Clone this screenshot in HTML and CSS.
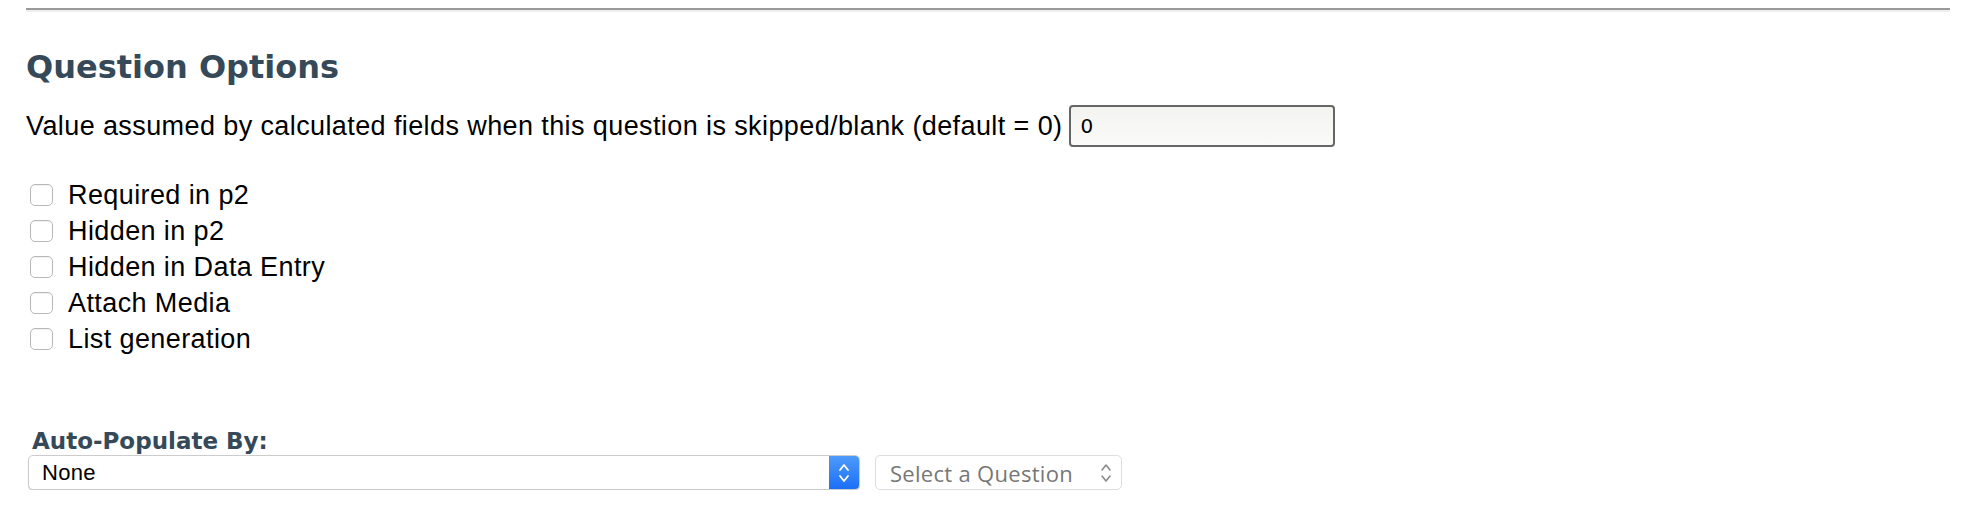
FILE: index.html
```html
<!DOCTYPE html>
<html lang="en">
<head>
    <meta charset="UTF-8">
    <title>Question Options</title>
    <link rel="stylesheet" href="styles.css">
</head>
<body>
    <div class="panel">
        <hr class="divider">

        <h2 class="section-title">Question Options</h2>

        <div class="default-row">
            <label for="blank-value">Value assumed by calculated fields when this question is skipped/blank (default = 0)</label>
            <input type="text" id="blank-value" class="blank-input" value="0">
        </div>

        <div class="flags">
            <label class="flag"><input type="checkbox" id="required"> Required in p2</label>
            <label class="flag"><input type="checkbox" id="hidden"> Hidden in p2</label>
            <label class="flag"><input type="checkbox" id="hidden-entry"> Hidden in Data Entry</label>
            <label class="flag"><input type="checkbox" id="attach-media"> Attach Media</label>
            <label class="flag"><input type="checkbox" id="list-gen"> List generation</label>
        </div>

        <div class="populate">
            <div class="populate-title">Auto-Populate By:</div>
            <div class="populate-row">
                <div class="select-box primary">
                    <select id="populate-by">
                        <option>None</option>
                        <option>Question</option>
                    </select>
                    <span class="chevrons">
                        <svg width="12" height="22" viewBox="0 0 12 22"><path d="M2 8 L6 3 L10 8 M2 14 L6 19 L10 14" fill="none" stroke="#fff" stroke-width="1.8" stroke-linecap="round" stroke-linejoin="round"/></svg>
                    </span>
                </div>
                <div class="select-box secondary">
                    <select id="populate-question">
                        <option>Select a Question</option>
                    </select>
                    <span class="chevrons">
                        <svg width="12" height="22" viewBox="0 0 12 22"><path d="M2 8 L6 3 L10 8 M2 14 L6 19 L10 14" fill="none" stroke="#8a8a8a" stroke-width="1.6" stroke-linecap="round" stroke-linejoin="round"/></svg>
                    </span>
                </div>
            </div>
        </div>
    </div>
</body>
</html>
```

FILE: styles.css
```css
body {
    margin: 0;
    font-family: "Liberation Sans", Arial, sans-serif;
    color: #000;
    background: #fff;
}
.panel {
    padding: 8px 38px 0 26px;
}
.divider {
    margin: 0;
    border: none;
    border-top: 2px solid #999;
    border-bottom: 2px solid #eee;
    height: 0;
}
.section-title {
    font-family: "DejaVu Sans", Verdana, sans-serif;
    font-weight: bold;
    font-size: 32px;
    color: #364958;
    margin: 36px 0 0 0;
    line-height: 38px;
}
.default-row {
    display: flex;
    align-items: center;
    gap: 7px;
    margin-top: 19px;
    font-size: 27px;
    letter-spacing: 0.4px;
}
.blank-input {
    width: 250px;
    height: 38px;
    box-sizing: content-box;
    padding: 0 3px 0 9px;
    border: 2px solid #666;
    border-radius: 4px;
    background: linear-gradient(#f3f3f0, #fafaf8);
    font-family: "DejaVu Sans", Verdana, sans-serif;
    font-size: 20px;
    letter-spacing: 0;
    color: #000;
}
.flags {
    margin-top: 30px;
    display: flex;
    flex-direction: column;
}
.flag {
    display: flex;
    align-items: center;
    gap: 15px;
    height: 36px;
    font-size: 27px;
    letter-spacing: 0.4px;
    padding-left: 4px;
}
.flag input[type="checkbox"] {
    appearance: none;
    -webkit-appearance: none;
    margin: 0;
    width: 23px;
    height: 22px;
    border: 1px solid #b8b8b8;
    border-radius: 5px;
    background: #fff;
    box-shadow: inset 0 1px 1px rgba(0,0,0,0.06);
}
.populate {
    margin-top: 71px;
    padding-left: 2px;
}
.populate-title {
    font-family: "DejaVu Sans", Verdana, sans-serif;
    font-weight: bold;
    font-size: 23px;
    color: #364958;
    line-height: 26px;
    padding-left: 4px;
}
.populate-row {
    display: flex;
    gap: 15px;
    margin-top: 1px;
}
.select-box {
    display: flex;
    height: 33px;
    border: 1px solid #ccc;
    border-radius: 5px;
    background: #fff;
    box-shadow: 0 1px 1px rgba(0,0,0,0.15);
    overflow: hidden;
}
.select-box select {
    appearance: none;
    -webkit-appearance: none;
    border: none;
    background: transparent;
    flex: 1;
    padding: 0 13px;
    font-family: "Liberation Sans", Arial, sans-serif;
    font-size: 22px;
    letter-spacing: 0.3px;
    color: #000;
    outline: none;
}
.primary {
    width: 830px;
}
.primary .chevrons {
    width: 30px;
    display: flex;
    align-items: center;
    justify-content: center;
    background: linear-gradient(#4d9bfb, #1b6ff6);
}
.secondary {
    width: 245px;
    border-color: #ddd;
    box-shadow: none;
}
.secondary select {
    color: #777;
    font-family: "Open Sans", "Liberation Sans", sans-serif;
    font-size: 22px;
    letter-spacing: 0.3px;
    padding-left: 14px;
}
.secondary .chevrons {
    width: 30px;
    display: flex;
    align-items: center;
    justify-content: center;
}
```
